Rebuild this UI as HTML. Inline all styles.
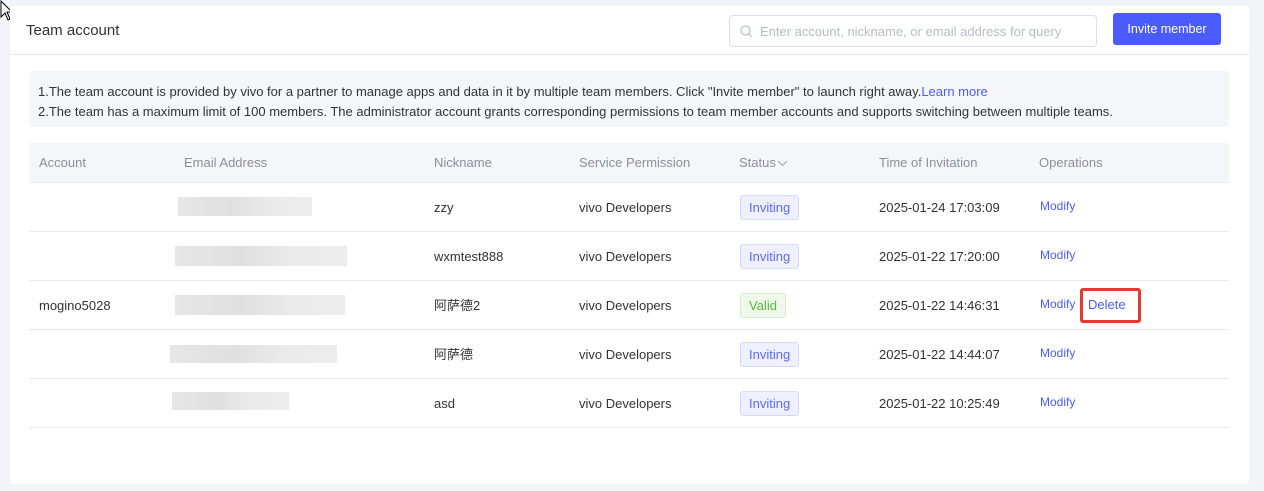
<!DOCTYPE html>
<html><head><meta charset="utf-8"><style>
*{box-sizing:border-box;margin:0;padding:0}
body{width:1264px;height:491px;background:#f3f4f8;font-family:"Liberation Sans","Noto Sans CJK SC",sans-serif;position:relative;overflow:hidden;color:#333}
.card{position:absolute;left:10px;top:6px;width:1239px;height:478px;background:#fff;border-radius:3px}
.abs{position:absolute}
.title{left:16px;top:16px;font-size:15px;color:#333}
.hline{left:0;top:48px;width:1239px;height:1px;background:#e8eaef}
.search{left:719px;top:9px;width:368px;height:32px;border:1px solid #dcdfe6;border-radius:4px;color:#b8bcc6;font-size:13px;padding:8px 0 0 30px}
.btn{left:1103px;top:7px;width:108px;height:32px;background:#4a5cff;border-radius:3px;color:#fff;font-size:12.5px;text-align:center;line-height:32px}
.notice{left:19px;top:65px;width:1200px;height:56px;background:#f5f6fa;border-radius:4px;padding:11px 0 0 9px;font-size:13px;line-height:20px;color:#333}
.notice a{color:#4a5cff;text-decoration:none}
.th{left:19px;top:137px;width:1200px;height:40px;background:#f5f6fa;border-bottom:1px solid #e8eaef}
.c{position:absolute;font-size:13px;white-space:nowrap;line-height:15px;height:15px}
.h{color:#8a8f99}
.row{position:absolute;left:19px;width:1200px;height:49px;border-bottom:1px solid #e8eaef}
.blur{position:absolute;height:19px;background:linear-gradient(90deg,#e6e6e6,#e0e0e0 40%,#ebebeb 70%,#ececec)}
.tag{position:absolute;left:711px;top:12px;height:25px;border-radius:3px;font-size:13px;line-height:23px;padding:0 8px;border:1px solid}
.inv{background:#eef0ff;border-color:#d5daff;color:#5b6bff}
.val{background:#eef8ea;border-color:#d5edcc;color:#5cb83a}
.lk{color:#4a5cff;font-size:12px}
</style></head><body>
<svg class="abs" style="left:0;top:0" width="14" height="22" viewBox="0 0 14 22"><path d="M1 1 L1 17 L5 13 L8 20 L10 19 L7 12 L12 12 Z" fill="#fff" stroke="#000" stroke-width="1"/></svg>
<div class="card">
<div class="abs title">Team account</div>
<div class="abs hline"></div>
<div class="abs search">Enter account, nickname, or email address for query
<svg class="abs" style="left:10px;top:9px" width="13" height="13" viewBox="0 0 13 13"><circle cx="5.5" cy="5.5" r="4.5" fill="none" stroke="#b8bcc6" stroke-width="1.2"/><path d="M9 9 L12 12" stroke="#b8bcc6" stroke-width="1.2"/></svg></div>
<div class="abs btn">Invite member</div>
<div class="abs notice">1.The team account is provided by vivo for a partner to manage apps and data in it by multiple team members. Click "Invite member" to launch right away.<a>Learn more</a><br>2.The team has a maximum limit of 100 members. The administrator account grants corresponding permissions to team member accounts and supports switching between multiple teams.</div>
<div class="abs th">
<span class="c h" style="left:10px;top:12px">Account</span>
<span class="c h" style="left:155px;top:12px">Email Address</span>
<span class="c h" style="left:405px;top:12px">Nickname</span>
<span class="c h" style="left:550px;top:12px">Service Permission</span>
<span class="c h" style="left:710px;top:12px">Status<svg width="11" height="8" viewBox="0 0 11 8" style="margin-left:1px"><path d="M1 2 L5.5 6.5 L10 2" fill="none" stroke="#a0a4ad" stroke-width="1"/></svg></span>
<span class="c h" style="left:850px;top:12px">Time of Invitation</span>
<span class="c h" style="left:1010px;top:12px">Operations</span>
</div>
<div class="row" style="top:177px"><div class="blur" style="left:149px;top:14px;width:134px"></div>
<span class="c" style="left:405px;top:17px">zzy</span><span class="c" style="left:550px;top:17px">vivo Developers</span>
<span class="tag inv">Inviting</span><span class="c" style="left:850px;top:17px">2025-01-24 17:03:09</span><span class="c lk" style="left:1011px;top:16px">Modify</span></div>
<div class="row" style="top:226px"><div class="blur" style="left:146px;top:14px;width:172px;height:20px"></div>
<span class="c" style="left:405px;top:17px">wxmtest888</span><span class="c" style="left:550px;top:17px">vivo Developers</span>
<span class="tag inv">Inviting</span><span class="c" style="left:850px;top:17px">2025-01-22 17:20:00</span><span class="c lk" style="left:1011px;top:16px">Modify</span></div>
<div class="row" style="top:275px"><span class="c" style="left:10px;top:17px">mogino5028</span><div class="blur" style="left:146px;top:14px;width:170px;height:20px"></div>
<span class="c" style="left:405px;top:17px">阿萨德2</span><span class="c" style="left:550px;top:17px">vivo Developers</span>
<span class="tag val">Valid</span><span class="c" style="left:850px;top:17px">2025-01-22 14:46:31</span><span class="c lk" style="left:1011px;top:16px">Modify</span>
<span class="c lk" style="left:1059px;top:16px;font-size:13px">Delete</span>
<div class="abs" style="left:1051px;top:7px;width:61px;height:35px;border:3px solid #e53935;border-radius:3px"></div></div>
<div class="row" style="top:324px"><div class="blur" style="left:141px;top:15px;width:167px;height:18px"></div>
<span class="c" style="left:405px;top:17px">阿萨德</span><span class="c" style="left:550px;top:17px">vivo Developers</span>
<span class="tag inv">Inviting</span><span class="c" style="left:850px;top:17px">2025-01-22 14:44:07</span><span class="c lk" style="left:1011px;top:16px">Modify</span></div>
<div class="row" style="top:373px"><div class="blur" style="left:143px;top:13px;width:117px;height:18px"></div>
<span class="c" style="left:405px;top:17px">asd</span><span class="c" style="left:550px;top:17px">vivo Developers</span>
<span class="tag inv">Inviting</span><span class="c" style="left:850px;top:17px">2025-01-22 10:25:49</span><span class="c lk" style="left:1011px;top:16px">Modify</span></div>
</div>
</body></html>
